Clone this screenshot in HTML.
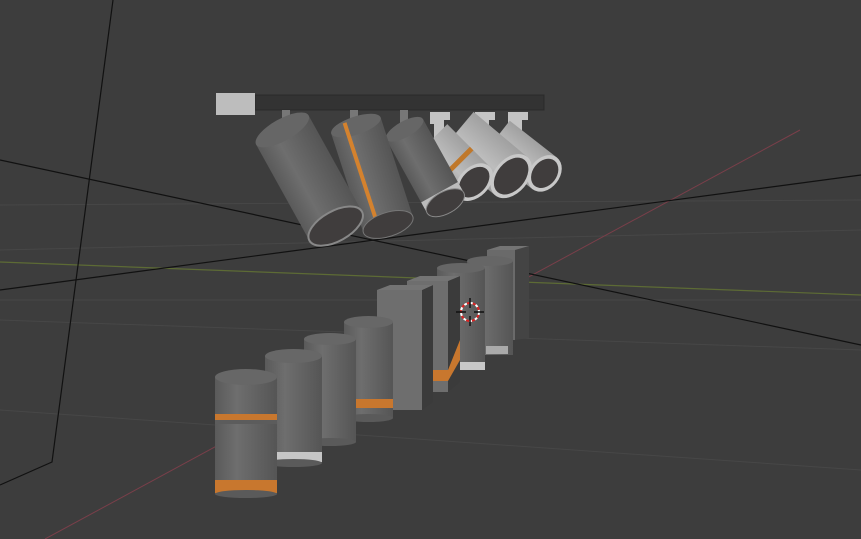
<!DOCTYPE html>
<html><head><style>html,body{margin:0;padding:0;background:#3d3d3d;overflow:hidden}svg{display:block}</style></head>
<body>
<svg width="861" height="539" viewBox="0 0 861 539" xmlns="http://www.w3.org/2000/svg">
<defs>
<linearGradient id="cyl" x1="0" x2="1" y1="0" y2="0">
<stop offset="0" stop-color="#5a5a5a"/><stop offset="0.35" stop-color="#6e6e6e"/><stop offset="1" stop-color="#555"/></linearGradient>
<linearGradient id="wcyl" x1="0" x2="1"><stop offset="0" stop-color="#9a9a9a"/><stop offset="0.4" stop-color="#bdbdbd"/><stop offset="1" stop-color="#a0a0a0"/></linearGradient>
</defs>
<rect width="861" height="539" fill="#3d3d3d"/>
<g stroke="#474747" stroke-width="1" fill="none">
<path d="M0 250 L861 230"/><path d="M0 320 L861 350"/><path d="M0 410 L861 470"/><path d="M0 205 L861 200"/>
<path d="M0 300 L861 300"/>
</g>
<path d="M0 262 L861 295" stroke="#5d6b35" stroke-width="1.2"/>
<path d="M45 539 L800 130" stroke="#7a3f4a" stroke-width="1"/>
<g stroke="#111" stroke-width="1.2" fill="none">
<path d="M0 160 L861 345"/>
<path d="M0 290 L861 175"/>
<path d="M113 0 L52 462 L0 485"/>
</g>
<rect x="255" y="95" width="289" height="15" fill="#333" stroke="#2a2a2a"/>
<rect x="216" y="93" width="39" height="22" fill="#bdbdbd"/>
<g fill="#777"><rect x="282" y="110" width="8" height="14"/><rect x="350" y="110" width="8" height="14"/><rect x="400" y="110" width="8" height="14"/></g>
<g fill="#c4c4c4"><path d="M430 112h20v8h-6v30h-10v-26h-4z"/><path d="M475 112h20v8h-6v28h-10v-24h-4z"/><path d="M508 112h20v8h-6v26h-10v-22h-4z"/></g>
<g transform="translate(525,158) rotate(-52)"><rect x="-20" y="-35" width="40" height="60" fill="url(#wcyl)"/><ellipse cx="0" cy="25" rx="20" ry="15" fill="#c8c8c8"/><ellipse cx="0" cy="25" rx="16" ry="12" fill="#403d3d"/></g>
<g transform="translate(492,160) rotate(-50)"><rect x="-25" y="-45" width="50" height="70" fill="url(#wcyl)"/><ellipse cx="0" cy="25" rx="25" ry="17" fill="#c8c8c8"/><ellipse cx="0" cy="25" rx="21" ry="14" fill="#403d3d"/></g>
<g transform="translate(460,168) rotate(-45)"><rect x="-22" y="-40" width="44" height="60" fill="url(#wcyl)"/><rect x="-22" y="-8" width="44" height="5" fill="#c0782a"/><ellipse cx="0" cy="20" rx="22" ry="15" fill="#c8c8c8"/><ellipse cx="0" cy="20" rx="18" ry="12" fill="#403d3d"/></g>
<g transform="translate(425,166) rotate(-29)"><rect x="-21" y="-42" width="42" height="84" fill="url(#cyl)"/><ellipse cx="0" cy="-42" rx="21" ry="8" fill="#666"/><rect x="-21" y="30" width="42" height="10" fill="#bbb"/><ellipse cx="0" cy="42" rx="21" ry="11" fill="#403d3d" stroke="#888"/></g>
<g transform="translate(372,175) rotate(-18)"><rect x="-26" y="-52" width="52" height="104" fill="url(#cyl)"/><ellipse cx="0" cy="-52" rx="26" ry="9" fill="#666"/><rect x="-12" y="-58" width="4" height="108" fill="#d4822e"/><ellipse cx="0" cy="52" rx="26" ry="12" fill="#403d3d" stroke="#777"/></g>
<g transform="translate(309,178) rotate(-29)"><rect x="-30" y="-55" width="60" height="110" fill="url(#cyl)"/><ellipse cx="0" cy="-55" rx="30" ry="11" fill="#666"/><ellipse cx="0" cy="55" rx="30" ry="15" fill="#403d3d" stroke="#888" stroke-width="2"/></g>
<!-- back objects -->
<rect x="487" y="250" width="28" height="90" fill="#6a6a6a"/><polygon points="515,250 529,246 529,338 515,340" fill="#444"/><polygon points="487,250 500,246 529,246 515,250" fill="#747474"/>
<rect x="467" y="261" width="46" height="94" fill="url(#cyl)"/><ellipse cx="490" cy="261" rx="23" ry="5" fill="#666"/><rect x="486" y="346" width="22" height="8" fill="#aaa"/>
<rect x="437" y="268" width="48" height="100" fill="url(#cyl)"/><ellipse cx="461" cy="268" rx="24" ry="5" fill="#666"/><rect x="459" y="362" width="26" height="8" fill="#c8c8c8"/>
<rect x="407" y="281" width="41" height="111" fill="#6e6e6e"/><polygon points="448,281 460,276 460,382 448,392" fill="#3b3b3b"/><polygon points="407,281 420,276 460,276 448,281" fill="#747474"/><rect x="407" y="370" width="41" height="11" fill="#c8772e"/><polygon points="448,370 460,340 460,360 448,381" fill="#c8772e"/>
<rect x="377" y="290" width="45" height="120" fill="#6e6e6e"/><polygon points="422,290 433,285 433,402 422,410" fill="#3b3b3b"/><polygon points="377,290 390,285 433,285 422,290" fill="#747474"/>
<rect x="344" y="322" width="49" height="96" fill="url(#cyl)"/><ellipse cx="368.5" cy="418" rx="24.5" ry="4" fill="#5a5a5a"/><rect x="344" y="399" width="49" height="9" fill="#c8772e"/><ellipse cx="368.5" cy="322" rx="24.5" ry="6" fill="#676767"/>
<rect x="304" y="339" width="52" height="103" fill="url(#cyl)"/><ellipse cx="330" cy="442" rx="26" ry="4" fill="#5a5a5a"/><ellipse cx="330" cy="339" rx="26" ry="6" fill="#676767"/>
<rect x="265" y="356" width="57" height="107" fill="url(#cyl)"/><rect x="265" y="452" width="57" height="10" fill="#c6c6c6"/><ellipse cx="293.5" cy="463" rx="28.5" ry="4" fill="#5a5a5a"/><ellipse cx="293.5" cy="356" rx="28.5" ry="7" fill="#676767"/>
<rect x="215" y="377" width="62" height="117" fill="url(#cyl)"/><rect x="215" y="414" width="62" height="6" fill="#c8772e"/><rect x="215" y="420" width="62" height="4" fill="#5c5c5c"/><rect x="215" y="480" width="62" height="13" fill="#c8772e"/><ellipse cx="246" cy="494" rx="31" ry="4" fill="#5a5a5a"/><ellipse cx="246" cy="377" rx="31" ry="8" fill="#676767"/>
<g transform="translate(470,312)"><circle r="9" fill="none" stroke="#fff" stroke-width="2" stroke-dasharray="3 3"/><circle r="9" fill="none" stroke="#d22" stroke-width="2" stroke-dasharray="3 3" stroke-dashoffset="3"/><path d="M-14 0h10M4 0h10M0 -14v10M0 4v10" stroke="#111" stroke-width="1.5"/></g>
</svg>
</body></html>
